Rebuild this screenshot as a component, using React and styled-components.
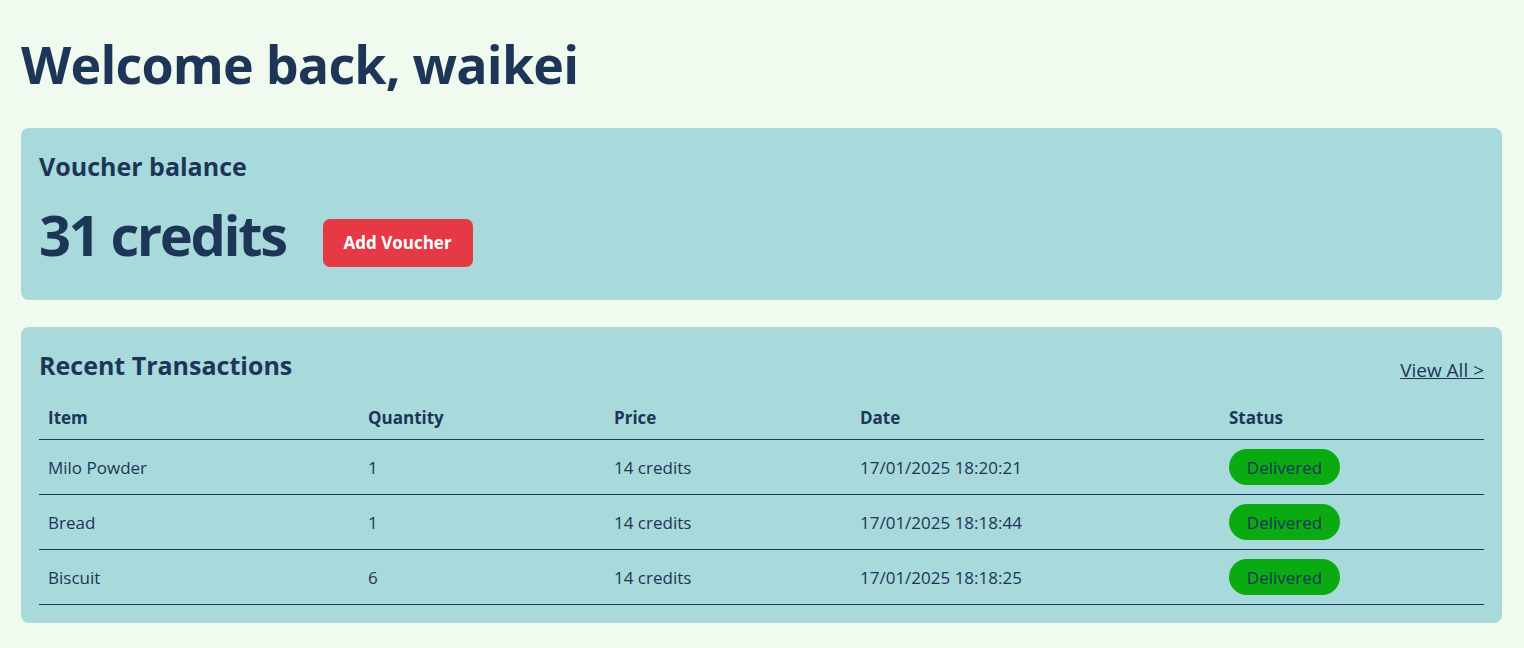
import React from "react"
import styled, { createGlobalStyle } from "styled-components"

const GlobalStyle = createGlobalStyle`
  body {
    margin: 0;
    background: #f1faee;
    font-family: "Open Sans", "Noto Sans", sans-serif;
    color: #1d3557;
  }
`

const Page = styled.main`
  display: flex;
  flex-direction: column;
  padding: 24px 22px 24px 21px;
`

const Title = styled.h1`
  margin: 0 0 24px;
  font-size: 52px;
  font-weight: 700;
  line-height: 80px;
  letter-spacing: -0.8px;
`

const Card = styled.section`
  background: #a8dadc;
  border-radius: 8px;
  margin-bottom: 27px;
  padding: ${props => props.$pad || "18px"};
`

const CardTitle = styled.h2`
  margin: 0;
  font-size: 25px;
  font-weight: 700;
  line-height: 32.5px;
`

const BalanceRow = styled.div`
  display: flex;
  align-items: flex-start;
  gap: 37px;
  margin-top: 16px;
  height: 70px;
`

const Amount = styled.span`
  font-size: 56px;
  font-weight: 700;
  line-height: 70px;
  letter-spacing: -2.4px;
`

const AddButton = styled.button`
  width: 150px;
  height: 48px;
  margin-top: 20px;
  border: none;
  border-radius: 7px;
  background: #e63946;
  color: #ffffff;
  font-family: inherit;
  font-size: 17px;
  font-weight: 700;
  cursor: pointer;
`

const CardHeader = styled.div`
  display: flex;
  justify-content: space-between;
  align-items: flex-end;
`

const ViewAll = styled.a`
  color: #1d3557;
  font-size: 19px;
  text-decoration: underline;
  margin-bottom: -2px;
`

const Table = styled.table`
  width: 100%;
  border-collapse: collapse;
  margin-top: 15px;

  th,
  td {
    text-align: left;
    padding: 0 9px;
    border-bottom: 1px solid #1d3557;
    vertical-align: middle;
  }

  th {
    height: 43px;
    font-size: 17px;
    font-weight: 700;
  }

  td {
    height: 54px;
    font-size: 17px;
    font-weight: 400;
  }
`

const Badge = styled.span`
  display: inline-flex;
  align-items: center;
  justify-content: center;
  width: 111px;
  height: 36px;
  border-radius: 18px;
  background: ${props => (props.$status === "Delivered" ? "#0aab12" : "#e63946")};
  color: #1d3557;
  font-size: 17px;
`

const transactions = [
  { item: "Milo Powder", qty: 1, price: "14 credits", date: "17/01/2025 18:20:21", status: "Delivered" },
  { item: "Bread", qty: 1, price: "14 credits", date: "17/01/2025 18:18:44", status: "Delivered" },
  { item: "Biscuit", qty: 6, price: "14 credits", date: "17/01/2025 18:18:25", status: "Delivered" },
]

const App = () => {
  return (
    <>
      <GlobalStyle />
      <Page>
        <Title>Welcome back, waikei</Title>
        <Card $pad="22px 18px 31px">
          <CardTitle>Voucher balance</CardTitle>
          <BalanceRow>
            <Amount>31 credits</Amount>
            <AddButton>Add Voucher</AddButton>
          </BalanceRow>
        </Card>
        <Card $pad="22px 18px 18px">
          <CardHeader>
            <CardTitle>Recent Transactions</CardTitle>
            <ViewAll href="#">View All &gt;</ViewAll>
          </CardHeader>
          <Table>
            <colgroup>
              <col style={{ width: "320px" }} />
              <col style={{ width: "246px" }} />
              <col style={{ width: "246px" }} />
              <col style={{ width: "369px" }} />
              <col />
            </colgroup>
            <thead>
              <tr>
                <th>Item</th>
                <th>Quantity</th>
                <th>Price</th>
                <th>Date</th>
                <th>Status</th>
              </tr>
            </thead>
            <tbody>
              {transactions.map(t => (
                <tr key={t.date}>
                  <td>{t.item}</td>
                  <td>{t.qty}</td>
                  <td>{t.price}</td>
                  <td>{t.date}</td>
                  <td>
                    <Badge $status={t.status}>{t.status}</Badge>
                  </td>
                </tr>
              ))}
            </tbody>
          </Table>
        </Card>
      </Page>
    </>
  )
}

export default App
